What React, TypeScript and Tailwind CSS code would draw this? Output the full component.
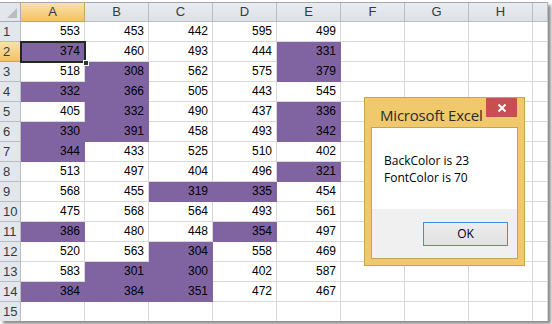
import React from 'react';

const cols = ['A', 'B', 'C', 'D', 'E', 'F', 'G', 'H', ''];

// values for columns A-E, purple flags for the same cells
const rows: [number, boolean][][] = [
  [[553, false], [453, false], [442, false], [595, false], [499, false]],
  [[374, true], [460, false], [493, false], [444, false], [331, true]],
  [[518, false], [308, true], [562, false], [575, false], [379, true]],
  [[332, true], [366, true], [505, false], [443, false], [545, false]],
  [[405, false], [332, true], [490, false], [437, false], [336, true]],
  [[330, true], [391, true], [458, false], [493, false], [342, true]],
  [[344, true], [433, false], [525, false], [510, false], [402, false]],
  [[513, false], [497, false], [404, false], [496, false], [321, true]],
  [[568, false], [455, false], [319, true], [335, true], [454, false]],
  [[475, false], [568, false], [564, false], [493, false], [561, false]],
  [[386, true], [480, false], [448, false], [354, true], [497, false]],
  [[520, false], [563, false], [304, true], [558, false], [469, false]],
  [[583, false], [301, true], [300, true], [402, false], [587, false]],
  [[384, true], [384, true], [351, true], [472, false], [467, false]],
];

function Dialog() {
  return (
    <div className="absolute left-[364px] top-[97px] w-[161px] h-[169px] bg-[#f0c96c] border border-[#c9a150] flex flex-col px-[6px] pb-[6px]">
      <div className="h-[29px] flex items-start justify-between">
        <span className="pl-[9px] pt-[9px] text-[15px] leading-[16px] text-[#2b2b2b] font-['Open_Sans',sans-serif] tracking-[-0.2px]">
          Microsoft Excel
        </span>
        <div className="w-[31px] h-[19px] bg-[#c74f50] flex items-center justify-center mr-[1px]">
          <svg width="10" height="10" viewBox="0 0 10 10">
            <path d="M1.5 1.5 L8.5 8.5 M8.5 1.5 L1.5 8.5" stroke="white" strokeWidth="2" />
          </svg>
        </div>
      </div>
      <div className="flex-1 border border-[#c9a150] flex flex-col font-['Open_Sans',sans-serif] text-[12px] text-black">
        <div className="h-[81px] bg-white pl-[12px] pt-[24px] leading-[17px]">
          <div>BackColor is 23</div>
          <div>FontColor is 70</div>
        </div>
        <div className="flex-1 bg-[#f0f0f0] flex justify-end items-start pt-[13px] pr-[9px]">
          <div className="w-[85px] h-[24px] border border-[#3c8fe8] bg-gradient-to-b from-[#ececec] to-[#e2e2e2] flex items-center justify-center text-[12px]">
            OK
          </div>
        </div>
      </div>
    </div>
  );
}

export default function App() {
  return (
    <div className="w-[552px] h-[324px] bg-white relative overflow-hidden pt-[2px]">
      <div className="w-[548px] h-[319px] relative overflow-hidden border-t border-[#a4a8ad] shadow-[3px_3px_3px_rgba(0,0,0,0.45)] bg-white font-['Liberation_Sans',Arial,sans-serif] text-[12px] text-black">
        <div className="grid grid-cols-[21px_repeat(8,64px)_15px]">
          {/* header row */}
          <div className="h-[19px] bg-[#e3e7ec] border-r border-b border-[#a8adb3] relative">
            <div className="absolute right-[3px] bottom-[3px] w-0 h-0 border-l-[10px] border-l-transparent border-b-[10px] border-b-[#b9bdc2]" />
          </div>
          {cols.map((c, i) => (
            <div
              key={i}
              className={`h-[19px] border-r border-b flex items-center justify-center text-[13px] text-[#333a44] ${
                i === 0
                  ? 'bg-gradient-to-b from-[#fae2a8] to-[#f2c262] border-[#c8a55b]'
                  : 'bg-gradient-to-b from-[#e9ecf0] to-[#dde1e6] border-[#b8bdc3]'
              }`}
            >
              {c}
            </div>
          ))}

          {Array.from({ length: 15 }).map((_, r) => {
            const data = rows[r];
            return (
              <React.Fragment key={r}>
                <div
                  className={`h-[20px] border-r border-b pl-[3px] leading-[19px] text-[13px] text-[#333a44] ${
                    r === 1
                      ? 'bg-gradient-to-b from-[#fae2a8] to-[#f2c262] border-[#c8a55b]'
                      : 'bg-[#e3e7ec] border-[#b8bdc3]'
                  }`}
                >
                  {r + 1}
                </div>
                {cols.map((_, c) => {
                  const cell = data && c < 5 ? data[c] : null;
                  const purple = cell ? cell[1] : false;
                  return (
                    <div
                      key={c}
                      className={`h-[20px] border-r border-b text-right pr-[4px] leading-[19px] ${
                        purple ? 'bg-[#8064a2] border-[#8064a2]' : 'border-[#d8d8d8]'
                      }`}
                    >
                      {cell ? cell[0] : ''}
                    </div>
                  );
                })}
              </React.Fragment>
            );
          })}
        </div>

        {/* active cell A2 */}
        <div className="absolute left-[20px] top-[38px] w-[66px] h-[22px] border-2 border-[#1f2a1f]" />
        <div className="absolute left-[83px] top-[57px] w-[6px] h-[6px] bg-[#2a3a2a] border border-white" />
      </div>

      <Dialog />
    </div>
  );
}
